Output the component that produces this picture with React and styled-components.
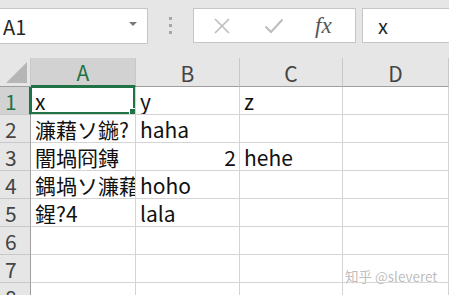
import styled, { createGlobalStyle } from "styled-components";

const GlobalStyle = createGlobalStyle`
  html, body {
    margin: 0;
    padding: 0;
    background: #fff;
  }
  body {
    font-family: "Noto Sans CJK SC", "Noto Sans", sans-serif;
  }
`;

const Frame = styled.div`
  width: 449px;
  height: 295px;
  overflow: hidden;
  position: relative;
  background: #fff;
`;

const TopBar = styled.div`
  display: flex;
  align-items: flex-start;
  height: 58px;
  box-sizing: border-box;
  padding-top: 8px;
  background: #e6e6e6;
`;

const NameBox = styled.div`
  width: 148px;
  height: 36px;
  box-sizing: border-box;
  background: #fff;
  border: 1px solid #c6c6c6;
  border-left: none;
  display: flex;
  align-items: center;
  justify-content: space-between;
  padding: 0 10px 0 3px;
  font-size: 20px;
  color: #262626;
`;

const Arrow = styled.span`
  width: 0;
  height: 0;
  border-left: 4px solid transparent;
  border-right: 4px solid transparent;
  border-top: 4px solid #777;
  margin-top: -4px;
`;

const Grip = styled.div`
  width: 45px;
  height: 35px;
  display: flex;
  flex-direction: column;
  align-items: center;
  justify-content: center;
  gap: 4px;
`;

const GripDot = styled.span`
  width: 3px;
  height: 3px;
  background: #a6a6a6;
`;

const FormulaButtons = styled.div`
  width: 163px;
  height: 35px;
  box-sizing: border-box;
  background: #fff;
  border: 1px solid #c6c6c6;
  display: flex;
  align-items: center;
  padding-left: 19px;
  gap: 33px;
`;

const Fx = styled.span`
  font-family: "Liberation Serif", serif;
  font-style: italic;
  font-size: 23px;
  color: #555;
  margin-left: -2px;
`;

const FormulaInput = styled.div`
  flex: 1;
  margin-left: 6px;
  height: 35px;
  box-sizing: border-box;
  background: #fff;
  border: 1px solid #c6c6c6;
  border-right: none;
  display: flex;
  align-items: center;
  padding-left: 15px;
  font-size: 20px;
  color: #262626;
`;

const Sheet = styled.div`
  display: grid;
  grid-template-columns: 31px 105px 104px 103px 1fr;
  grid-template-rows: 29px repeat(8, 28px);
`;

const Corner = styled.div`
  background: #e6e6e6;
  border-right: 1px solid #c8c8c8;
  border-bottom: 1px solid #9e9e9e;
  position: relative;
  &::after {
    content: "";
    position: absolute;
    right: 3px;
    bottom: 3px;
    border-left: 21px solid transparent;
    border-bottom: 21px solid #b6b6b6;
  }
`;

const ColHead = styled.div`
  background: ${(p) => (p.$active ? "#d2d2d2" : "#e6e6e6")};
  color: ${(p) => (p.$active ? "#217346" : "#444")};
  border-right: 1px solid #c8c8c8;
  border-bottom: ${(p) => (p.$active ? "2px solid #217346" : "1px solid #9e9e9e")};
  display: flex;
  align-items: center;
  justify-content: center;
  font-size: 21px;
  padding-top: 1px;
`;

const RowHead = styled.div`
  background: ${(p) => (p.$active ? "#d2d2d2" : "#e6e6e6")};
  color: ${(p) => (p.$active ? "#217346" : "#444")};
  border-right: ${(p) => (p.$active ? "2px solid #217346" : "1px solid #9e9e9e")};
  border-bottom: 1px solid #c8c8c8;
  display: flex;
  align-items: flex-end;
  padding: 0 0 0 5px;
  font-size: 21px;
  line-height: 26px;
  box-sizing: border-box;
`;

const Cell = styled.div`
  border-right: 1px solid #d4d4d4;
  border-bottom: 1px solid #d4d4d4;
  display: flex;
  align-items: flex-end;
  justify-content: ${(p) => (p.$num ? "flex-end" : "flex-start")};
  padding: 0 3px 0 4px;
  font-size: 21px;
  line-height: 26px;
  color: #111;
  white-space: nowrap;
  overflow: hidden;
  min-width: 0;
  box-sizing: border-box;
  position: relative;
`;

const Selection = styled.div`
  position: absolute;
  inset: -1px 0 0 -1px;
  border: 2px solid #217346;
  pointer-events: none;
  &::after {
    content: "";
    position: absolute;
    right: -4px;
    bottom: -4px;
    width: 6px;
    height: 6px;
    background: #217346;
    border: 1px solid #fff;
  }
`;

const Watermark = styled.div`
  position: absolute;
  left: 345px;
  top: 266px;
  font-size: 13.5px;
  white-space: nowrap;
  color: rgba(160, 160, 160, 0.7);
  text-shadow: 0 0 2px #fff, 0 0 1px #fff;
`;

const XIcon = () => (
  <svg width="18" height="18" viewBox="0 0 18 18">
    <path d="M2 2 L16 16 M16 2 L2 16" stroke="#bdbdbd" strokeWidth="1.6" fill="none" />
  </svg>
);

const CheckIcon = () => (
  <svg width="20" height="16" viewBox="0 0 20 16">
    <path d="M1.5 8.5 L7 14 L18.5 1.5" stroke="#bdbdbd" strokeWidth="2" fill="none" />
  </svg>
);

const cols = ["A", "B", "C", "D"];

const rows = [
  ["x", "y", "z", ""],
  ["濂藉ソ鍦?", "haha", "", ""],
  ["闇堝冏鏄", "2", "hehe", ""],
  ["鍝堝ソ濂藉", "hoho", "", ""],
  ["鍟?4", "lala", "", ""],
  ["", "", "", ""],
  ["", "", "", ""],
  ["", "", "", ""],
];

const App = () => {
  return (
    <Frame>
      <GlobalStyle />
      <TopBar>
        <NameBox>
          A1
          <Arrow />
        </NameBox>
        <Grip>
          <GripDot />
          <GripDot />
          <GripDot />
        </Grip>
        <FormulaButtons>
          <XIcon />
          <CheckIcon />
          <Fx>fx</Fx>
        </FormulaButtons>
        <FormulaInput>x</FormulaInput>
      </TopBar>
      <Sheet>
        <Corner />
        {cols.map((c) => (
          <ColHead key={c} $active={c === "A"}>
            {c}
          </ColHead>
        ))}
        {rows.map((r, i) => [
          <RowHead key={`h${i}`} $active={i === 0}>
            {i + 1}
          </RowHead>,
          ...r.map((v, j) => (
            <Cell key={`${i}-${j}`} $num={/^\d+$/.test(v)}>
              {v}
              {i === 0 && j === 0 && <Selection />}
            </Cell>
          )),
        ])}
      </Sheet>
      <Watermark>知乎 @sleveret</Watermark>
    </Frame>
  );
};

export default App;
